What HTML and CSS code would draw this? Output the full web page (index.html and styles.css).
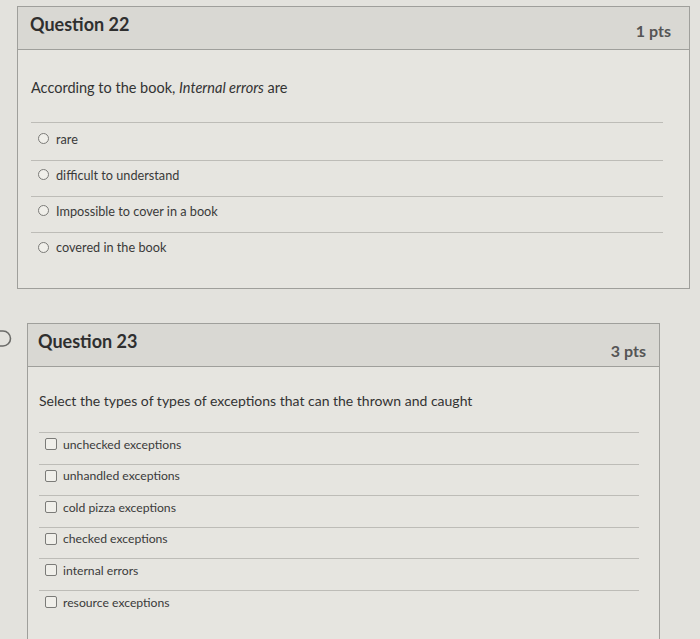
FILE: index.html
```html
<!DOCTYPE html>
<html>
<head>
<meta charset="utf-8">
<link rel="stylesheet" href="styles.css">
</head>
<body>
<div class="page">
  <section class="card card-one">
    <header class="card-head">
      <h2 class="q-title">Question 22</h2>
      <span class="q-pts">1 pts</span>
    </header>
    <div class="card-body">
      <p class="q-text">According to the book, <em>Internal errors</em> are</p>
      <ul class="answers radios">
        <li class="answer"><span class="radio"></span><span>rare</span></li>
        <li class="answer"><span class="radio"></span><span>difficult to understand</span></li>
        <li class="answer"><span class="radio"></span><span>Impossible to cover in a book</span></li>
        <li class="answer"><span class="radio"></span><span>covered in the book</span></li>
      </ul>
    </div>
  </section>

  <div class="row-two">
    <svg class="flag" width="12" height="20" viewBox="0 0 12 20">
      <path d="M-4 2 H3 A7.5 7.5 0 0 1 3 17 H-4" fill="none" stroke="#6b6b68" stroke-width="1.6"/>
    </svg>
    <section class="card card-two">
      <header class="card-head">
        <h2 class="q-title">Question 23</h2>
        <span class="q-pts">3 pts</span>
      </header>
      <div class="card-body">
        <p class="q-text">Select the types of types of exceptions that can the thrown and caught</p>
        <ul class="answers checks">
          <li class="answer"><span class="check"></span><span>unchecked exceptions</span></li>
          <li class="answer"><span class="check"></span><span>unhandled exceptions</span></li>
          <li class="answer"><span class="check"></span><span>cold pizza exceptions</span></li>
          <li class="answer"><span class="check"></span><span>checked exceptions</span></li>
          <li class="answer"><span class="check"></span><span>internal errors</span></li>
          <li class="answer"><span class="check"></span><span>resource exceptions</span></li>
        </ul>
      </div>
    </section>
  </div>
</div>
</body>
</html>
```

FILE: styles.css
```css
html, body {
  margin: 0;
  padding: 0;
}
body {
  background: #e3e2dd;
  font-family: Lato, "Open Sans", sans-serif;
  color: #3b3b3b;
  width: 700px;
  height: 639px;
  overflow: hidden;
}
.page {
  padding-top: 6px;
}
.card {
  background: #e6e5e0;
  border: 1px solid #9f9f9b;
  box-sizing: border-box;
}
.card-one {
  margin-left: 17px;
  width: 673px;
  height: 283px;
}
.row-two {
  display: flex;
  align-items: flex-start;
  margin-top: 34px;
}
.flag {
  margin-top: 6px;
  flex: none;
}
.card-two {
  margin-left: 15px;
  width: 633px;
  height: 320px;
}
.card-head {
  height: 43px;
  background: #d9d8d3;
  border-bottom: 1px solid #9f9f9b;
  display: flex;
  justify-content: space-between;
  align-items: flex-start;
  box-sizing: border-box;
}
.card-one .card-head {
  padding: 5px 18px 0 12px;
}
.card-two .card-head {
  padding: 5px 13px 0 10px;
}
.q-title {
  margin: 0;
  font-size: 18px;
  font-weight: 700;
  color: #2f2f2f;
  line-height: 24px;
}
.q-pts {
  font-size: 16px;
  font-weight: 700;
  color: #555;
  line-height: 24px;
}
.card-one .q-pts {
  margin-top: 7px;
}
.card-two .q-pts {
  margin-top: 10px;
}
.card-body {
  box-sizing: border-box;
}
.card-one .card-body {
  padding: 28px 26px 0 13px;
}
.card-two .card-body {
  padding: 24px 20px 0 11px;
}
.q-text {
  margin: 0;
  font-size: 14.5px;
  line-height: 20px;
  color: #333;
  padding-bottom: 24px;
  border-bottom: 1px solid #bdbcb7;
}
.card-two .q-text {
  font-size: 14px;
  padding-bottom: 21px;
}
.q-text em {
  font-style: italic;
}
.answers {
  list-style: none;
  margin: 0;
  padding: 0;
}
.answer {
  display: flex;
  align-items: center;
  color: #3a3a3a;
  border-bottom: 1px solid #bdbcb7;
  box-sizing: border-box;
}
.answer:last-child {
  border-bottom: none;
}
.radios .answer {
  font-size: 12.7px;
  height: 36px;
  padding: 0 0 8px 7px;
  gap: 7px;
}
.radios .answer:first-child {
  height: 38px;
  padding-bottom: 6px;
}
.checks .answer {
  font-size: 12.2px;
  height: 31.5px;
  padding: 0 0 8px 6px;
  gap: 6px;
}
.radio {
  width: 11px;
  height: 11px;
  border: 1px solid #7b7b78;
  border-radius: 50%;
  background: #f0efea;
  box-sizing: border-box;
  flex: none;
}
.check {
  width: 12px;
  height: 12px;
  border: 1px solid #7b7b78;
  border-radius: 2px;
  background: #f0efea;
  box-sizing: border-box;
  flex: none;
}
```
